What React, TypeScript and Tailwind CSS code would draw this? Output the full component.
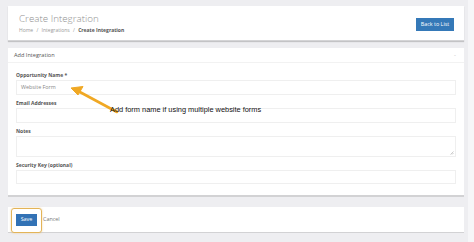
import React from "react";

const font = { fontFamily: '"Open Sans", "Noto Sans", sans-serif' };

function Field({ label, h, value }: { label: string; h: string; value?: string }) {
  const tall = h === "t";
  return (
    <div className="flex flex-col">
      <div className="text-[5px] font-bold text-[#555] leading-[6px] h-[6px]">{label}</div>
      <div
        className={`relative mt-[2px] border border-[#efefef] bg-white flex items-center px-[4px] text-[5.4px] text-[#888] ${
          h === "t" ? "h-[21px]" : h === "s" ? "h-[14px]" : "h-[15px]"
        }`}
      >
        {value}
        {tall && (
          <svg className="absolute right-[1px] bottom-[1px]" width="4" height="4" viewBox="0 0 4 4">
            <path d="M3.5 0.5 L0.5 3.5 M3.5 2 L2 3.5" stroke="#aaa" strokeWidth="0.6" />
          </svg>
        )}
      </div>
    </div>
  );
}

export default function App() {
  return (
    <div className="relative w-[474px] h-[242px] bg-[#eeeef1] flex overflow-hidden" style={font}>
      <div className="flex-1 flex flex-col pl-[8px] pr-[4px] pt-[6px]">
        {/* header card */}
        <div className="bg-white h-[35px] flex items-center justify-between pl-[11px] pr-[10px] shadow-[0_1px_1px_rgba(0,0,0,0.18)] border-b border-[#d4d4d6]">
          <div className="flex flex-col">
            <div className="text-[9.8px] leading-[13px] text-[#929292] font-light">Create Integration</div>
            <div className="text-[5px] leading-[7px] text-[#999] mt-[2px]">
              Home <span className="mx-[2px]">/</span> Integrations <span className="mx-[2px]">/</span>{" "}
              <span className="font-bold text-[#555]">Create Integration</span>
            </div>
          </div>
          <div className="mt-[2px] bg-[#3579b8] text-white text-[5.4px] h-[13px] w-[38px] flex items-center justify-center">
            Back to List
          </div>
        </div>

        {/* form card */}
        <div className="mt-[7px] bg-white h-[149px] flex flex-col border-b-2 border-[#d2d2d4]">
          <div className="h-[15px] flex items-center justify-between pl-[6px] pr-[8px] border-b border-[#f2f2f2]">
            <span className="text-[5.6px] text-[#555]">Add Integration</span>
            <span className="text-[6px] text-[#bbb] leading-none">-</span>
          </div>
          <div className="flex flex-col gap-[5px] px-[8px] pt-[9px]">
            <Field label="Opportunity Name *" h="n" value="Website Form" />
            <Field label="Email Addresses" h="n" />
            <Field label="Notes" h="t" />
            <Field label="Security Key (optional)" h="s" />
          </div>
        </div>

        {/* footer card */}
        <div className="mt-[10px] bg-white h-[26px] flex items-center pl-[8px] gap-[6px] border-b border-[#d2d2d4]">
          <div className="relative bg-[#3272b5] text-white text-[5.4px] h-[12px] w-[21px] flex items-center justify-center">
            Save
            <div className="absolute -left-[5px] -top-[6px] w-[31px] h-[25px] rounded-[3px] border-[1.5px] border-[#e3b458] shadow-[0_0_2px_rgba(227,180,88,0.6)]" />
          </div>
          <span className="text-[5.4px] text-[#777]">Cancel</span>
        </div>
      </div>
      <div className="w-[6px] bg-[#f6f6f8]" />

      {/* annotation */}
      <svg className="absolute left-0 top-0" width="474" height="242" viewBox="0 0 474 242">
        <line x1="117" y1="112" x2="78" y2="91" stroke="#f0a824" strokeWidth="2.6" strokeLinecap="round" />
        <path d="M71 88 L83 86.5 L78 95 Z" fill="#f0a824" stroke="#f0a824" strokeWidth="1" strokeLinejoin="round" />
      </svg>
      <div
        className="absolute left-[110px] top-[105px] text-[7.4px] leading-[10px] text-[#111]"
        style={{ fontFamily: '"Liberation Sans", Arial, sans-serif' }}
      >
        Add form name if using multiple website forms
      </div>
    </div>
  );
}
